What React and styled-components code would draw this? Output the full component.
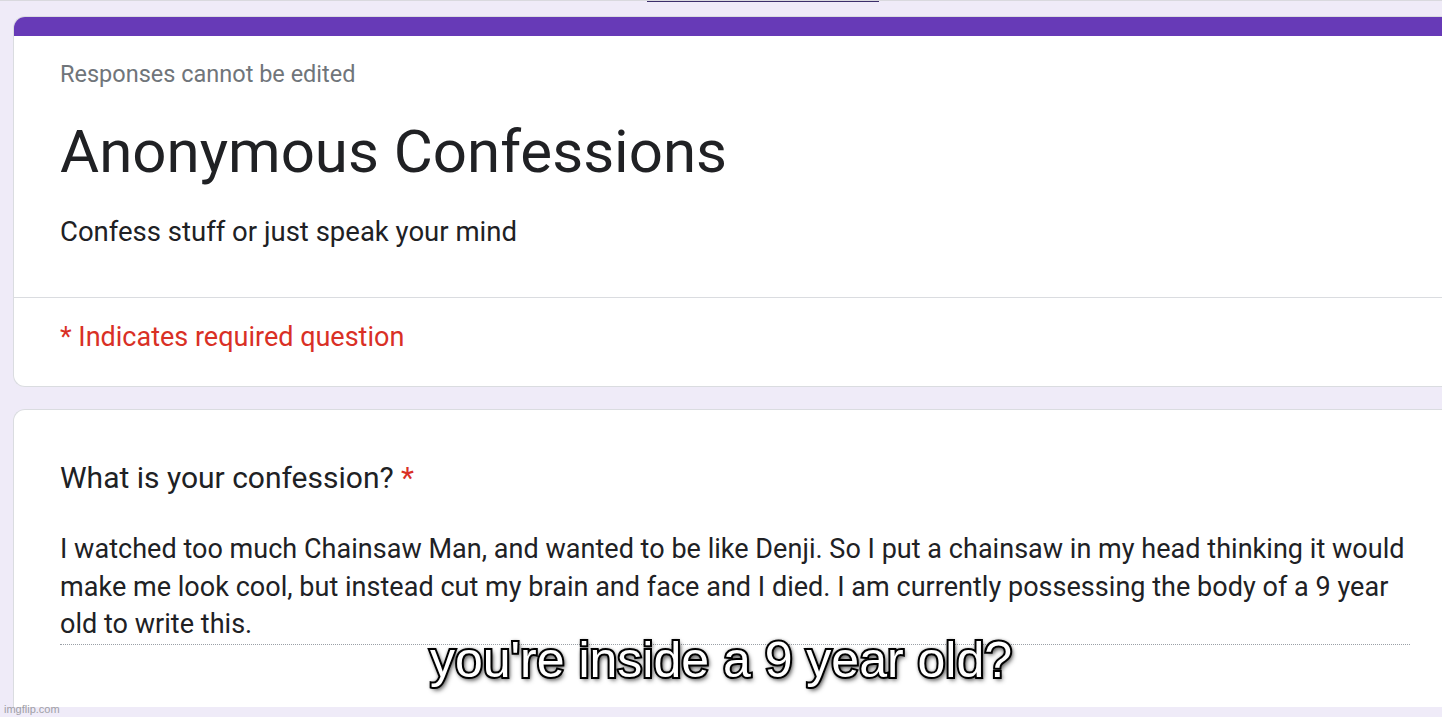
import React from "react";
import styled, { createGlobalStyle } from "styled-components";

const GlobalStyle = createGlobalStyle`
  html, body {
    margin: 0;
    padding: 0;
    background: #efebf8;
    overflow: hidden;
  }
  * {
    box-sizing: border-box;
  }
`;

const Page = styled.div`
  position: relative;
  height: 717px;
  display: flex;
  flex-direction: column;
  gap: 22px;
  padding: 15px 0 10px 13px;
  background: #efebf8;
  border-top: 1px solid #d9d9de;
  font-family: Roboto, "Liberation Sans", sans-serif;
  overflow: hidden;
`;

const TabMark = styled.div`
  position: absolute;
  top: -1px;
  left: 647px;
  width: 232px;
  height: 2px;
  background: #3c2f6b;
`;

const Card = styled.div`
  background: #ffffff;
  border: 1px solid #dadce0;
  border-right: none;
  border-radius: 12px 0 0 12px;
  overflow: hidden;
  ${(p) => p.$grow && `
    flex: 1;
    border-bottom: none;
    border-radius: 12px 0 0 0;
  `}
`;

const AccentBar = styled.div`
  height: 19px;
  background: #673ab7;
`;

const Section = styled.div`
  padding: ${(p) => p.$pad || "0 46px"};
`;

const Divider = styled.div`
  height: 1px;
  background: #dadce0;
`;

const Note = styled.div`
  font-size: 23.5px;
  color: #70757a;
  line-height: 30px;
`;

const Title = styled.h1`
  margin: 23px 0 0;
  font-size: 60px;
  font-weight: 400;
  color: #202124;
  line-height: 80px;
`;

const Description = styled.div`
  margin-top: 22px;
  font-size: 27.5px;
  color: #202124;
  line-height: 36px;
`;

const Required = styled.div`
  font-size: 27px;
  color: #d93025;
  line-height: 32px;
`;

const Question = styled.div`
  font-size: 30px;
  color: #202124;
  line-height: 36px;
`;

const Star = styled.span`
  color: #d93025;
`;

const Answer = styled.div`
  margin: 35px 32px 0 0;
  font-size: 27px;
  letter-spacing: 0.03px;
  color: #202124;
  line-height: 37.5px;
  padding-bottom: 0;
  border-bottom: 1px dotted #9aa0a6;
`;

const Caption = styled.div`
  position: absolute;
  left: 0;
  right: 0;
  top: 631px;
  text-align: center;
  font-family: "Liberation Sans", Arial, sans-serif;
  font-size: 50px;
  line-height: 57px;
  color: #ffffff;
  -webkit-text-stroke: 4px #000;
  paint-order: stroke fill;
  text-shadow: 0 0 4px #000, 2px 3px 5px rgba(0, 0, 0, 0.8);
`;

const Watermark = styled.div`
  position: absolute;
  left: 4px;
  bottom: 2px;
  font-family: "Liberation Sans", Arial, sans-serif;
  font-size: 11px;
  color: #a09fa6;
`;

export default function App() {
  return (
    <>
      <GlobalStyle />
      <Page>
        <TabMark />
        <Card>
          <AccentBar />
          <Section $pad="23px 46px 47px">
            <Note>Responses cannot be edited</Note>
            <Title>Anonymous Confessions</Title>
            <Description>Confess stuff or just speak your mind</Description>
          </Section>
          <Divider />
          <Section $pad="23px 46px 33px">
            <Required>* Indicates required question</Required>
          </Section>
        </Card>
        <Card $grow>
          <Section $pad="50px 0 0 46px">
            <Question>
              What is your confession? <Star>*</Star>
            </Question>
            <Answer>
              I watched too much Chainsaw Man, and wanted to be like Denji. So I
              put a chainsaw in my head thinking it would make me look cool, but
              instead cut my brain and face and I died. I am currently
              possessing the body of a 9 year old to write this.
            </Answer>
          </Section>
        </Card>
        <Caption>you're inside a 9 year old?</Caption>
        <Watermark>imgflip.com</Watermark>
      </Page>
    </>
  );
}
